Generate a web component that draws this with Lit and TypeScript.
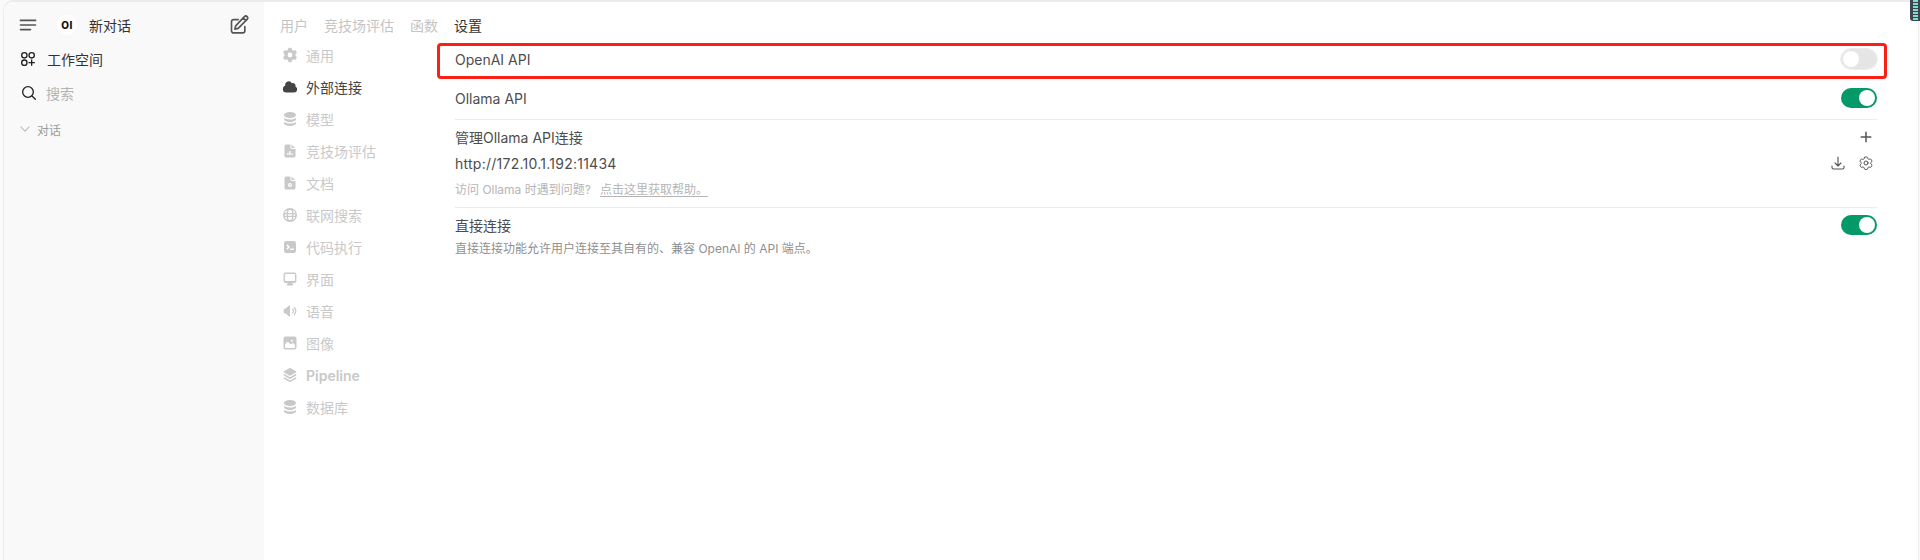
import { LitElement, html, css, svg } from "lit";
import { customElement } from "lit/decorators.js";

const solid = (d: any, vb = "0 0 20 20") => html`<svg class="ic" viewBox=${vb} fill="currentColor">${d}</svg>`;

const ICONS: Record<string, any> = {
  gear: solid(svg`<path fill-rule="evenodd" d="M7.84 1.804A1 1 0 0 1 8.82 1h2.36a1 1 0 0 1 .98.804l.331 1.652a6.993 6.993 0 0 1 1.929 1.115l1.598-.54a1 1 0 0 1 1.186.447l1.18 2.044a1 1 0 0 1-.205 1.251l-1.267 1.113a7.047 7.047 0 0 1 0 2.228l1.267 1.113a1 1 0 0 1 .206 1.25l-1.18 2.045a1 1 0 0 1-1.187.447l-1.598-.54a6.993 6.993 0 0 1-1.929 1.115l-.33 1.652a1 1 0 0 1-.98.804H8.82a1 1 0 0 1-.98-.804l-.331-1.652a6.993 6.993 0 0 1-1.929-1.115l-1.598.54a1 1 0 0 1-1.186-.447l-1.18-2.044a1 1 0 0 1 .205-1.251l1.267-1.114a7.05 7.05 0 0 1 0-2.227L1.821 7.773a1 1 0 0 1-.206-1.25l1.18-2.045a1 1 0 0 1 1.187-.447l1.598.54A6.992 6.992 0 0 1 7.51 3.456l.33-1.652ZM10 13a3 3 0 1 0 0-6 3 3 0 0 0 0 6Z" clip-rule="evenodd"/>`),
  cloud: solid(svg`<path d="M1 12.5A4.5 4.5 0 0 0 5.5 17H15a4 4 0 0 0 1.866-7.539 3.504 3.504 0 0 0-4.504-4.272A4.5 4.5 0 0 0 4.06 8.235 4.502 4.502 0 0 0 1 12.5Z"/>`),
  db: solid(svg`<path d="M8 7c3.314 0 6-1.343 6-3s-2.686-3-6-3-6 1.343-6 3 2.686 3 6 3Z"/><path d="M8 8.5c1.84 0 3.579-.37 4.914-1.037A6.33 6.33 0 0 0 14 6.78V8c0 1.657-2.686 3-6 3S2 9.657 2 8V6.78c.346.273.72.5 1.087.683C4.42 8.131 6.16 8.5 8 8.5Z"/><path d="M8 12.5c1.84 0 3.579-.37 4.914-1.037.366-.183.74-.41 1.086-.684V12c0 1.657-2.686 3-6 3s-6-1.343-6-3v-1.22c.346.273.72.5 1.087.683C4.42 12.131 6.16 12.5 8 12.5Z"/>`, "0 0 16 16"),
  doc: solid(svg`<path fill-rule="evenodd" d="M4 1.5A1.5 1.5 0 0 0 2.5 3v10A1.5 1.5 0 0 0 4 14.5h8a1.5 1.5 0 0 0 1.5-1.5V6.1H9.9a1.5 1.5 0 0 1-1.5-1.5V1.5H4Zm1.2 10.500V9.7h1.4V12H5.2Zm2.100 0V8h1.400v4H7.300Zm2.100 0v-1.500h1.400V12H9.400Z" clip-rule="evenodd"/><path d="M9.400 1.700v2.900c0 .3.200.5.500.5h3.300L9.400 1.700Z"/>`, "0 0 16 16"),
  file: solid(svg`<path fill-rule="evenodd" d="M4 1.5A1.500 1.500 0 0 0 2.500 3v10A1.500 1.500 0 0 0 4 14.500h8a1.500 1.500 0 0 0 1.500-1.500V6.100H9.900a1.500 1.500 0 0 1-1.500-1.500V1.500H4Zm4 10.500a2 2 0 1 0 0-4 2 2 0 0 0 0 4Zm0-1.200a.8.8 0 1 1 0-1.600.8.8 0 0 1 0 1.600Z" clip-rule="evenodd"/><path d="M9.400 1.700v2.900c0 .3.200.5.500.5h3.300L9.400 1.700Z"/>`, "0 0 16 16"),
  globe: solid(svg`<path fill-rule="evenodd" d="M8 15A7 7 0 1 0 8 1a7 7 0 0 0 0 14ZM2.700 7.200h1.900v1.600H2.700V7.200Zm0-1.200c.5-1.300 1.400-2.300 2.600-2.900-.4.800-.6 1.800-.7 2.900H2.700Zm3.200 0c.1-1.100.4-2.200.9-3h2.400c.5.800.8 1.900.9 3H5.900Zm5.500 0c-.1-1.100-.3-2.100-.7-2.900 1.200.6 2.100 1.600 2.600 2.900h-1.900Zm0 1.200h1.900v1.600h-1.900V7.200Zm-5.500 0h4.200v1.600H5.900V7.200ZM2.700 10h1.900c.1 1.100.3 2.100.7 2.900-1.200-.6-2.100-1.600-2.600-2.900Zm3.200 0h4.200c-.1 1.100-.4 2.200-.9 3H6.800c-.5-.8-.8-1.900-.9-3Zm5.500 0h1.900c-.5 1.300-1.400 2.300-2.600 2.900.4-.8.6-1.800.7-2.900Z" clip-rule="evenodd"/>`, "0 0 16 16"),
  term: solid(svg`<path fill-rule="evenodd" d="M2 4.250A2.250 2.250 0 0 1 4.250 2h7.500A2.250 2.250 0 0 1 14 4.250v7.500A2.250 2.250 0 0 1 11.750 14h-7.500A2.250 2.250 0 0 1 2 11.750v-7.500Zm2.720 1.470a.75.75 0 0 1 1.060 0l1.750 1.750a.75.75 0 0 1 0 1.060l-1.750 1.750a.75.75 0 1 1-1.060-1.060L5.940 8 4.720 6.780a.75.75 0 0 1 0-1.060ZM8.750 9.500a.75.75 0 0 0 0 1.500h2.500a.75.75 0 0 0 0-1.500h-2.500Z" clip-rule="evenodd"/>`, "0 0 16 16"),
  monitor: solid(svg`<path fill-rule="evenodd" d="M2 4.250A2.250 2.250 0 0 1 4.250 2h11.500A2.250 2.250 0 0 1 18 4.250v8.500A2.250 2.250 0 0 1 15.750 15h-3.105a3.501 3.501 0 0 0 1.100 1.677A.75.75 0 0 1 13.260 18H6.740a.75.75 0 0 1-.484-1.323A3.501 3.501 0 0 0 7.355 15H4.250A2.250 2.250 0 0 1 2 12.750v-8.500Zm1.800.250a.7.7 0 0 1 .7-.7h11a.7.7 0 0 1 .7.700v7.300a.7.7 0 0 1-.7.700h-11a.7.7 0 0 1-.7-.700V4.500Z" clip-rule="evenodd"/>`),
  sound: solid(svg`<path d="M10 3.750a.75.75 0 0 0-1.264-.546L4.703 7H3.167a.75.75 0 0 0-.7.48A6.985 6.985 0 0 0 2 10c0 .887.165 1.737.468 2.520.111.290.390.480.7.480h1.535l4.033 3.796A.75.75 0 0 0 10 16.250V3.750ZM15.950 5.050a.75.75 0 0 0-1.060 1.061 5.500 5.500 0 0 1 0 7.778.75.75 0 0 0 1.060 1.060 7 7 0 0 0 0-9.899ZM13.829 7.172a.75.75 0 0 0-1.061 1.060 2.500 2.500 0 0 1 0 3.536.75.75 0 0 0 1.060 1.060 4 4 0 0 0 0-5.656Z"/>`),
  image: solid(svg`<path fill-rule="evenodd" d="M3.500 1.500h9a2 2 0 0 1 2 2v9a2 2 0 0 1-2 2h-9a2 2 0 0 1-2-2v-9a2 2 0 0 1 2-2ZM3 12.300c0 .4.300.7.700.7h8.600c.4 0 .7-.3.700-.7V10l-1.700-1.700a.7.7 0 0 0-1 0L9 9.600 6.300 6.900a.7.7 0 0 0-1 0L3 9.200v3.100ZM11 5.700a1 1 0 1 0-2 0 1 1 0 0 0 2 0Z" clip-rule="evenodd"/>`, "0 0 16 16"),
  stack: solid(svg`<path d="M3.196 12.870l-.825.483a.75.75 0 0 0 0 1.294l7.250 4.250a.75.75 0 0 0 .758 0l7.250-4.250a.75.75 0 0 0 0-1.294l-.825-.484-5.666 3.322a2.250 2.250 0 0 1-2.276 0L3.196 12.870Z"/><path d="M3.196 8.870l-.825.483a.75.75 0 0 0 0 1.294l7.250 4.250a.75.75 0 0 0 .758 0l7.250-4.250a.75.75 0 0 0 0-1.294l-.825-.484-5.666 3.322a2.250 2.250 0 0 1-2.276 0L3.196 8.870Z"/><path d="M10.380 1.103a.75.75 0 0 0-.760 0l-7.250 4.250a.75.75 0 0 0 0 1.294l7.250 4.250a.75.75 0 0 0 .760 0l7.250-4.250a.75.75 0 0 0 0-1.294l-7.250-4.250Z"/>`),
};

const NAV: [string, string, boolean?][] = [
  ["gear", "通用"],
  ["cloud", "外部连接", true],
  ["db", "模型"],
  ["doc", "竞技场评估"],
  ["file", "文档"],
  ["globe", "联网搜索"],
  ["term", "代码执行"],
  ["monitor", "界面"],
  ["sound", "语音"],
  ["image", "图像"],
  ["stack", "Pipeline"],
  ["db", "数据库"],
];

@customElement("app-root")
export class AppRoot extends LitElement {
  static styles = css`
    :host {
      display: block;
      width: 1920px;
      height: 560px;
      overflow: hidden;
      background: #fafafa;
      font-family: Inter, "Noto Sans CJK SC", sans-serif;
      color: #333;
    }
    * { box-sizing: border-box; }
    .ic { width: 16px; height: 16px; display: block; flex: none; }
    .stage { position: relative; height: 100%; }
    .frame { display: flex; height: 100%; padding: 0 1px 0 3px; }
    .win {
      flex: 1;
      display: flex;
      background: #fff;
      border: solid #ececec;
      border-width: 2px 1px 0 1px;
      border-radius: 10px 0 0 0;
      overflow: hidden;
      min-width: 0;
    }
    .side {
      width: 260px;
      flex: none;
      background: #f9f9f9;
      padding-top: 11px;
      font-size: 14px;
    }
    .row { display: flex; align-items: center; }
    .top { height: 24px; padding-left: 14px; padding-right: 15px; }
    .logo {
      width: 20px; height: 20px; margin-left: 19px; margin-right: 12px;
      border-radius: 50%; background: #fff; color: #111;
      display: flex; align-items: center; justify-content: center;
      font-size: 10px; font-weight: 800; letter-spacing: 0.5px;
    }
    .grow { flex: 1; }
    .big { width: 20px; height: 20px; }
    .ws { height: 24px; margin-top: 10px; padding-left: 16px; gap: 11px; }
    .search { height: 24px; margin-top: 10px; padding-left: 17px; gap: 9px; color: #b4b4b4; }
    .search svg { color: #222; }
    .chats { margin-top: 14px; height: 20px; padding-left: 16px; gap: 7px; font-size: 12px; color: #9b9b9b; }
    .chev { width: 10px; height: 10px; }
    .main { flex: 1; min-width: 0; padding-top: 11px; padding-left: 16px; }
    .tabs { display: flex; gap: 16px; height: 24px; align-items: center; font-size: 14px; color: #c4c4c4; }
    .tabs .on { color: #333; }
    .body { display: flex; padding-top: 2px; }
    .nav { width: 175px; flex: none; font-size: 14px; color: #c9c9c9; }
    .nav .item { height: 32px; display: flex; align-items: center; gap: 8px; padding-left: 2px; }
    .nav .item.on { color: #444; }
    .nav .latin { font-weight: 600; }
    .content { flex: 1; min-width: 0; padding-right: 41px; font-size: 14px; color: #4d4d4d; padding-top: 5px; }
    .line { display: flex; align-items: center; justify-content: space-between; }
    .hl {
      position: absolute; left: 437px; top: 43px; width: 1450px; height: 36px;
      border: 3px solid #fa1f17; border-radius: 4px; pointer-events: none;
    }
    .l1 { height: 24px; margin-top: 3px; }
    .l2 { height: 24px; margin-top: 15px; }
    .rule1 { border: 0; border-top: 1px solid #ebebeb; margin: 9px 0 0; }
    .rule2 { border: 0; border-top: 1px solid #ebebeb; margin: 9px 0 0; }
    .l3 { height: 20px; margin-top: 7px; }
    .l3 svg { margin-right: 3px; }
    .url { height: 24px; margin-top: 4px; letter-spacing: 0.25px; }
    .tools { display: flex; gap: 12px; color: #555; align-items: center; margin-right: 3px; }
    .tools svg { width: 16px; height: 16px; }
    .help { font-size: 12px; color: #b5b5b5; margin-top: 3px; height: 20px; display: flex; align-items: center; gap: 9px; }
    .help u { text-underline-offset: 2px; }
    .l4 { height: 20px; margin-top: 7px; }
    .desc { font-size: 12px; color: #8f8f8f; height: 16px; display: flex; align-items: center; margin-top: 4px; }
    .sw {
      width: 36px; height: 20px; border-radius: 10px; background: #049968;
      display: flex; align-items: center; justify-content: flex-end; padding: 0 2px; flex: none;
    }
    .sw i { display: block; width: 16px; height: 16px; background: #fff; border-radius: 50%; }
    .sw.off { background: #e5e5e5; justify-content: flex-start; outline: 1px solid #ededed; }
    .handle {
      position: absolute; right: 0; top: 0; width: 10px; height: 21px;
      background: #3f4453; border-radius: 0 0 0 3px;
      display: flex; flex-direction: column; gap: 1px; padding: 0 2px 0 3px;
    }
    .handle b { display: block; height: 2px; background: #7fe0c4; }
  `;

  render() {
    return html`
      <div class="stage">
        <div class="frame">
          <div class="win">
            <aside class="side">
              <div class="row top">
                <svg class="ic big" viewBox="0 0 24 24" fill="none" stroke="#555" stroke-width="2" stroke-linecap="round"><path d="M3 6.500h18M3 12h18M3 17.500h12"/></svg>
                <span class="logo">OI</span>
                <span>新对话</span>
                <span class="grow"></span>
                <svg class="ic big" viewBox="0 0 24 24" fill="none" stroke="#555" stroke-width="2" stroke-linecap="round" stroke-linejoin="round"><path d="m16.900 3.400 3.200 3.200M18.500 2a2.200 2.200 0 0 1 3.200 3.200L11 16l-4 1 1-4L18.500 2Z"/><path d="M19 14v5a2.500 2.500 0 0 1-2.500 2.500h-11A2.500 2.500 0 0 1 3 19V8a2.500 2.500 0 0 1 2.500-2.500H11"/></svg>
              </div>
              <div class="row ws">
                <svg class="ic" viewBox="0 0 24 24" fill="none" stroke="#222" stroke-width="2" stroke-linecap="round"><circle cx="6.500" cy="6.500" r="4"/><circle cx="17.500" cy="6.500" r="4"/><circle cx="6.500" cy="17.500" r="4"/><path d="M17.500 13.500v8M13.500 17.500h8"/></svg>
                <span>工作空间</span>
              </div>
              <div class="row search">
                <svg class="ic" viewBox="0 0 24 24" fill="none" stroke="currentColor" stroke-width="2" stroke-linecap="round"><circle cx="10.500" cy="10.500" r="8"/><path d="m16.500 16.500 5 5"/></svg>
                <span>搜索</span>
              </div>
              <div class="row chats">
                <svg class="ic chev" viewBox="0 0 24 24" fill="none" stroke="#bbb" stroke-width="2.500" stroke-linecap="round" stroke-linejoin="round"><path d="m2 7 10 10L22 7"/></svg>
                <span>对话</span>
              </div>
            </aside>
            <main class="main">
              <nav class="tabs">
                <span>用户</span><span>竞技场评估</span><span>函数</span><span class="on">设置</span>
              </nav>
              <div class="body">
                <div class="nav">
                  ${NAV.map(
                    ([icon, label, on]) => html`<div class="item ${on ? "on" : ""} ${label === "Pipeline" ? "latin" : ""}">${ICONS[icon]}<span>${label}</span></div>`
                  )}
                </div>
                <div class="content">
                  <div class="line l1"><span>OpenAI API</span><span class="sw off"><i></i></span></div>
                  <div class="line l2"><span>Ollama API</span><span class="sw"><i></i></span></div>
                  <hr class="rule1" />
                  <div class="line l3">
                    <span>管理Ollama API连接</span>
                    <svg class="ic" viewBox="0 0 16 16" fill="#555"><path d="M8.750 3.250a.75.75 0 0 0-1.500 0v4h-4a.75.75 0 0 0 0 1.500h4v4a.75.75 0 0 0 1.500 0v-4h4a.75.75 0 0 0 0-1.500h-4v-4Z"/></svg>
                  </div>
                  <div class="line url">
                    <span>http://172.10.1.192:11434</span>
                    <span class="tools">
                      <svg viewBox="0 0 24 24" fill="none" stroke="currentColor" stroke-width="1.700" stroke-linecap="round" stroke-linejoin="round"><path d="M3 16.500v2.200A2.300 2.300 0 0 0 5.300 21h13.400a2.300 2.300 0 0 0 2.300-2.300v-2.200M16.500 12 12 16.500 7.500 12M12 16.500V3"/></svg>
                      <svg viewBox="0 0 24 24" fill="none" stroke="currentColor" stroke-width="1.500" stroke-linecap="round" stroke-linejoin="round"><path d="M9.600 3.900a1.100 1.100 0 0 1 1.100-.9h2.600c.5 0 1 .4 1.100.9l.2 1.300c.1.400.4.700.7.900l.5.3c.3.200.7.200 1.100.1l1.200-.5a1.100 1.100 0 0 1 1.400.5l1.300 2.200c.3.500.1 1.100-.3 1.400l-1 .8c-.3.300-.5.700-.4 1.100v.6c0 .4.100.8.400 1.100l1 .8c.4.300.6.900.3 1.400l-1.300 2.200a1.100 1.100 0 0 1-1.400.5l-1.200-.5c-.4-.1-.8-.1-1.100.1l-.5.3c-.3.200-.6.500-.7.900l-.2 1.300c-.1.500-.6.900-1.100.9h-2.600c-.5 0-1-.4-1.100-.9l-.2-1.300c-.1-.4-.4-.7-.7-.9l-.5-.3c-.3-.2-.7-.2-1.100-.1l-1.200.5a1.100 1.100 0 0 1-1.400-.5l-1.300-2.200c-.3-.5-.1-1.100.3-1.400l1-.8c.3-.3.5-.7.4-1.100v-.6c0-.4-.1-.8-.4-1.100l-1-.8a1.100 1.100 0 0 1-.3-1.400l1.300-2.200a1.100 1.100 0 0 1 1.400-.5l1.200.5c.4.1.8.1 1.100-.1l.5-.3c.3-.2.600-.5.700-.9l.2-1.300Z"/><circle cx="12" cy="12" r="3"/></svg>
                    </span>
                  </div>
                  <div class="help"><span>访问 Ollama 时遇到问题?</span><u>点击这里获取帮助。</u></div>
                  <hr class="rule2" />
                  <div class="line l4"><span>直接连接</span><span class="sw"><i></i></span></div>
                  <div class="desc">直接连接功能允许用户连接至其自有的、兼容 OpenAI 的 API 端点。</div>
                </div>
              </div>
            </main>
          </div>
        </div>
        <div class="hl"></div>
        <div class="handle">${[0, 1, 2, 3, 4, 5, 6].map(() => html`<b></b>`)}</div>
      </div>
    `;
  }
}
